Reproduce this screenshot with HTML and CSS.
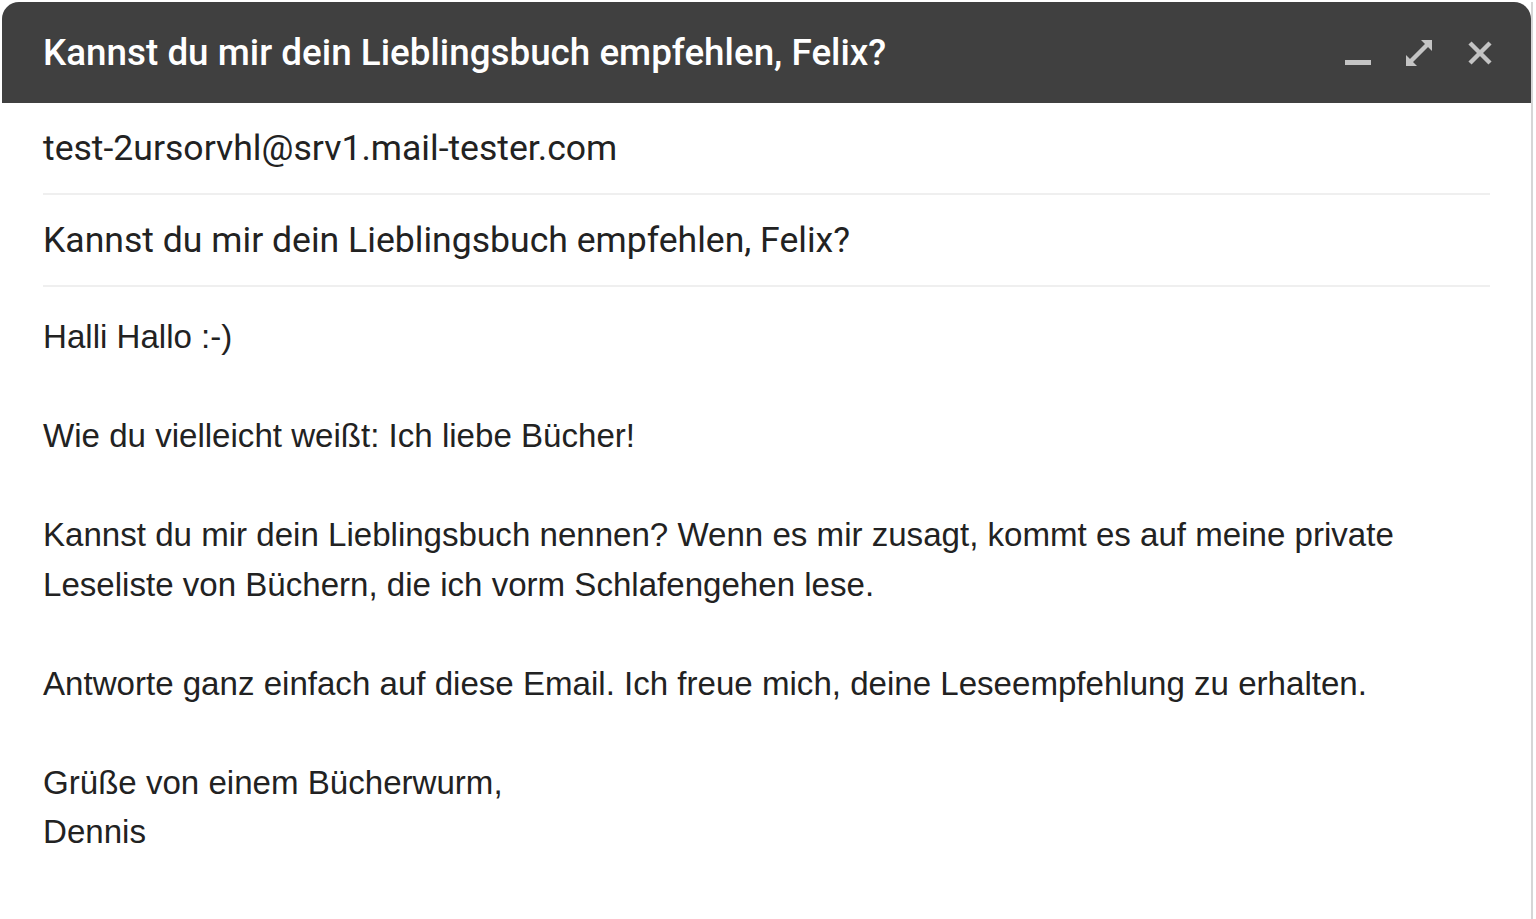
FILE: index.html
```html
<!DOCTYPE html>
<html lang="de">
<head>
<meta charset="utf-8">
<title>Kannst du mir dein Lieblingsbuch empfehlen, Felix?</title>
<link rel="stylesheet" href="styles.css">
</head>
<body>
<div class="compose">
  <div class="compose-header">
    <div class="compose-title">Kannst du mir dein Lieblingsbuch empfehlen, Felix?</div>
    <div class="compose-actions">
      <span class="action action-min"><svg width="26" height="26" viewBox="0 0 26 26"><rect x="0" y="20" width="26" height="5" fill="#c4c4c4"/></svg></span>
      <span class="action action-max"><svg width="26" height="26" viewBox="0 0 26 26"><polygon points="26,0 26,11 15,0" fill="#c4c4c4"/><polygon points="0,26 0,15 11,26" fill="#c4c4c4"/><line x1="5" y1="21" x2="21" y2="5" stroke="#c4c4c4" stroke-width="4.5"/></svg></span>
      <span class="action action-close"><svg width="26" height="26" viewBox="0 0 26 26"><line x1="3" y1="3" x2="23" y2="23" stroke="#c4c4c4" stroke-width="4.5"/><line x1="23" y1="3" x2="3" y2="23" stroke="#c4c4c4" stroke-width="4.5"/></svg></span>
    </div>
  </div>
  <div class="compose-fields">
    <div class="field">test-2ursorvhl@srv1.mail-tester.com</div>
    <div class="field">Kannst du mir dein Lieblingsbuch empfehlen, Felix?</div>
  </div>
  <div class="compose-body">
    <p>Halli Hallo :-)</p>
    <p>Wie du vielleicht weißt: Ich liebe Bücher!</p>
    <p>Kannst du mir dein Lieblingsbuch nennen? Wenn es mir zusagt, kommt es auf meine private<br>Leseliste von Büchern, die ich vorm Schlafengehen lese.</p>
    <p>Antworte ganz einfach auf diese Email. Ich freue mich, deine Leseempfehlung zu erhalten.</p>
    <p>Grüße von einem Bücherwurm,<br>Dennis</p>
  </div>
</div>
</body>
</html>
```
FILE: styles.css
```css
html, body {
  margin: 0;
  padding: 0;
  background: #ffffff;
}

body {
  overflow: hidden;
}

.compose {
  margin: 2px 0 0 2px;
  width: 1529px;
  height: 917px;
  border-right: 2px solid #d6d6d6;
  background: #ffffff;
  display: flex;
  flex-direction: column;
}

.compose-header {
  height: 101px;
  background: #404040;
  border-radius: 17px 17px 0 0;
  display: flex;
  align-items: center;
  justify-content: space-between;
  padding: 0 38px 0 41px;
  box-sizing: border-box;
  flex-shrink: 0;
}

.compose-title {
  font-family: Roboto, "Noto Sans", sans-serif;
  font-weight: 500;
  font-size: 36.8px;
  color: #ffffff;
}

.compose-actions {
  display: flex;
  align-items: center;
  gap: 35px;
}

.action {
  display: flex;
  width: 26px;
  height: 26px;
}

.compose-fields {
  padding: 0 41px;
}

.field {
  height: 90px;
  display: flex;
  align-items: center;
  border-bottom: 2px solid #efefef;
  font-family: Roboto, "Noto Sans", sans-serif;
  font-size: 35.6px;
  color: #222222;
}

.compose-body {
  padding: 25px 41px 0;
  font-family: "Liberation Sans", Arial, sans-serif;
  font-size: 33.1px;
  line-height: 49.5px;
  color: #222222;
}

.compose-body p {
  margin: 0 0 49.5px;
}
```
